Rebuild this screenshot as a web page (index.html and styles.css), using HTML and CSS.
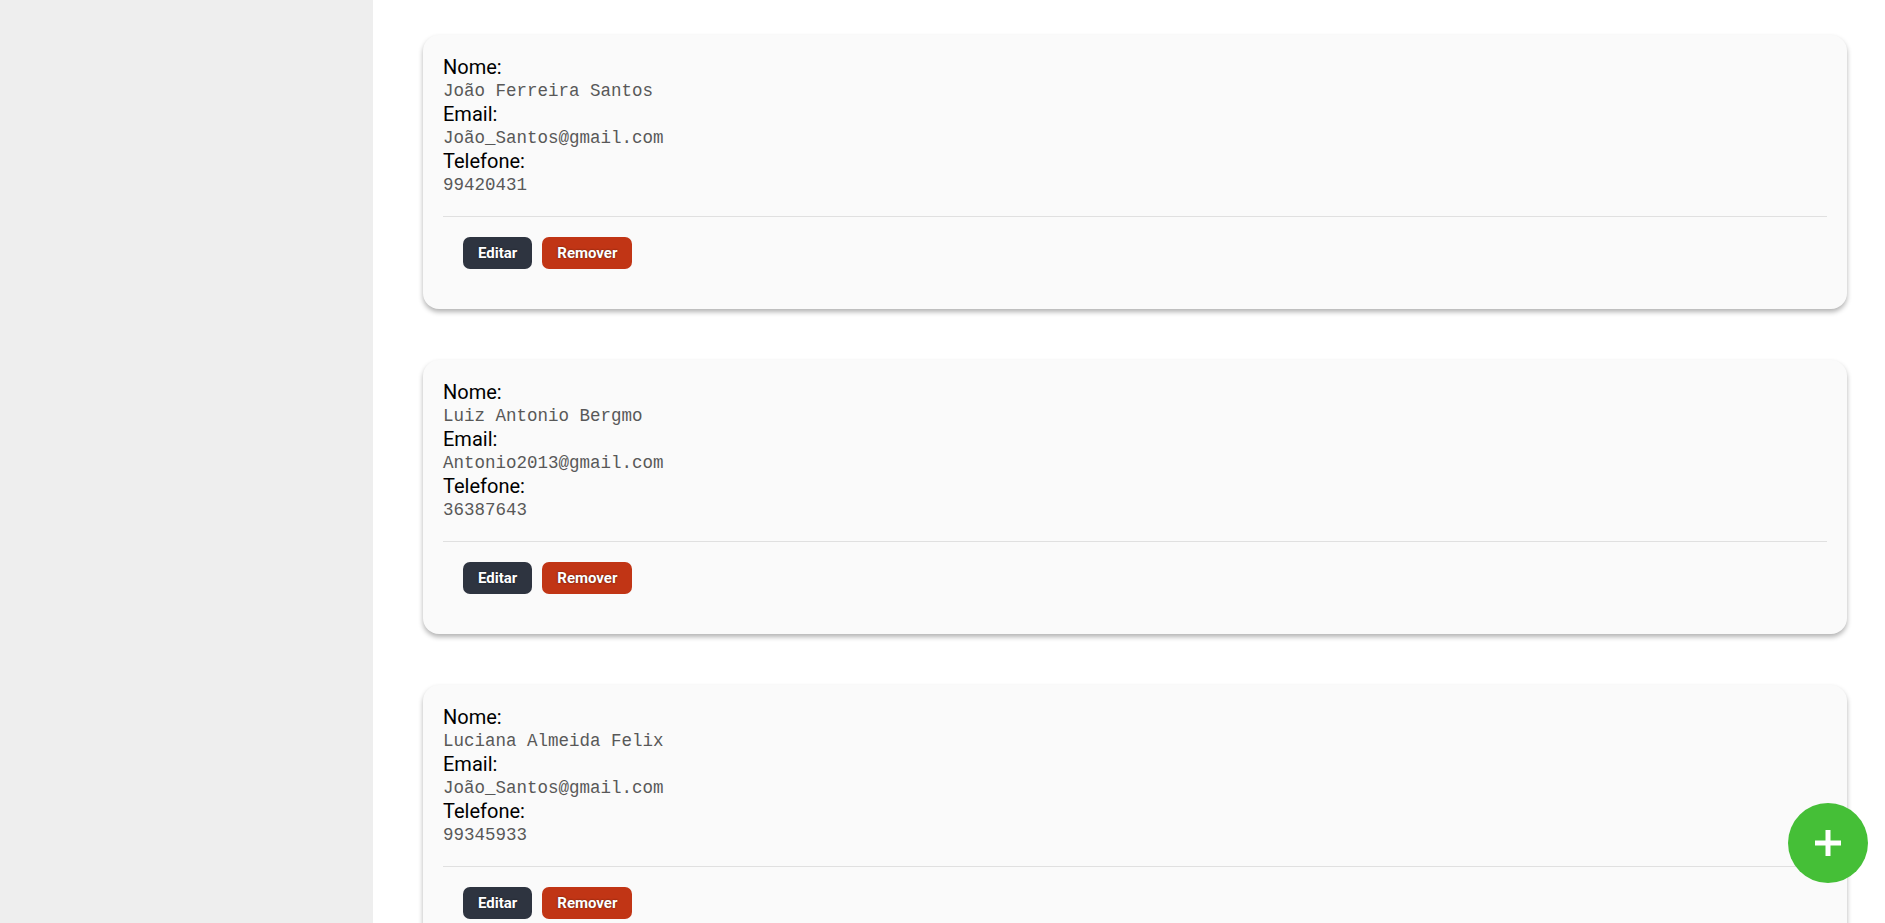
FILE: index.html
```html
<!DOCTYPE html>
<html lang="pt-BR">
<head>
    <meta charset="UTF-8">
    <meta name="viewport" content="width=device-width, initial-scale=1.0">
    <title>Contatos</title>
    <link rel="stylesheet" href="styles.css">
</head>
<body>

<div class="app">
    <aside class="sidebar"></aside>

    <main class="contacts">
        <div class="card">
            <div class="info">
                <p class="label">Nome:</p>
                <p class="value">João Ferreira Santos</p>
                <p class="label">Email:</p>
                <p class="value">João_Santos@gmail.com</p>
                <p class="label">Telefone:</p>
                <p class="value">99420431</p>
            </div>
            <div class="actions">
                <button class="btn edit">Editar</button>
                <button class="btn remove">Remover</button>
            </div>
        </div>

        <div class="card">
            <div class="info">
                <p class="label">Nome:</p>
                <p class="value">Luiz Antonio Bergmo</p>
                <p class="label">Email:</p>
                <p class="value">Antonio2013@gmail.com</p>
                <p class="label">Telefone:</p>
                <p class="value">36387643</p>
            </div>
            <div class="actions">
                <button class="btn edit">Editar</button>
                <button class="btn remove">Remover</button>
            </div>
        </div>

        <div class="card">
            <div class="info">
                <p class="label">Nome:</p>
                <p class="value">Luciana Almeida Felix</p>
                <p class="label">Email:</p>
                <p class="value">João_Santos@gmail.com</p>
                <p class="label">Telefone:</p>
                <p class="value">99345933</p>
            </div>
            <div class="actions">
                <button class="btn edit">Editar</button>
                <button class="btn remove">Remover</button>
            </div>
        </div>
    </main>
</div>

<button class="fab" aria-label="Adicionar contato">
    <svg width="28" height="28" viewBox="0 0 28 28">
        <path d="M14 1v26M1 14h26" stroke="#fff" stroke-width="5"/>
    </svg>
</button>

</body>
</html>
```

FILE: styles.css
```css
* {
    padding: 0;
    margin: 0;
    box-sizing: border-box;
}
html, body {
    height: 100%;
    overflow: hidden;
}
body {
    font-family: Roboto, "Liberation Sans", sans-serif;
    background-color: #fff;
}
.app {
    display: flex;
    height: 100%;
}
.sidebar {
    width: 373px;
    flex-shrink: 0;
    background-color: #eeeeee;
}
.contacts {
    flex: 1;
    padding: 35px 38px 0 50px;
    display: flex;
    flex-direction: column;
    gap: 51px;
}
.card {
    background-color: #fafafa;
    border-radius: 16px;
    box-shadow: 0px 3px 5px rgba(0, 0, 0, 0.3);
    padding: 21px 20px 20px;
    flex-shrink: 0;
}
.info {
    padding-bottom: 19px;
    border-bottom: 1px solid #e0e0e0;
}
.label {
    font-size: 20px;
    line-height: 23.5px;
    color: #000;
}
.value {
    font-family: "Liberation Mono", "DejaVu Sans Mono", monospace;
    font-size: 17.5px;
    line-height: 23.5px;
    color: #585858;
}
.actions {
    display: flex;
    gap: 10px;
    padding: 20px 20px 20px;
}
.btn {
    height: 32px;
    border: none;
    border-radius: 7px;
    padding: 0 15px;
    color: #fff;
    font-family: Roboto, "Liberation Sans", sans-serif;
    font-weight: bold;
    font-size: 15px;
    text-shadow: 0 0 2px rgba(0, 0, 0, 0.6);
    cursor: pointer;
}
.btn.edit {
    background-color: #2e3440;
}
.btn.remove {
    background-color: #c13515;
}
.fab {
    position: fixed;
    right: 17px;
    bottom: 40px;
    width: 80px;
    height: 80px;
    border-radius: 50%;
    border: none;
    background-color: #45bf37;
    display: flex;
    align-items: center;
    justify-content: center;
    cursor: pointer;
}
```
